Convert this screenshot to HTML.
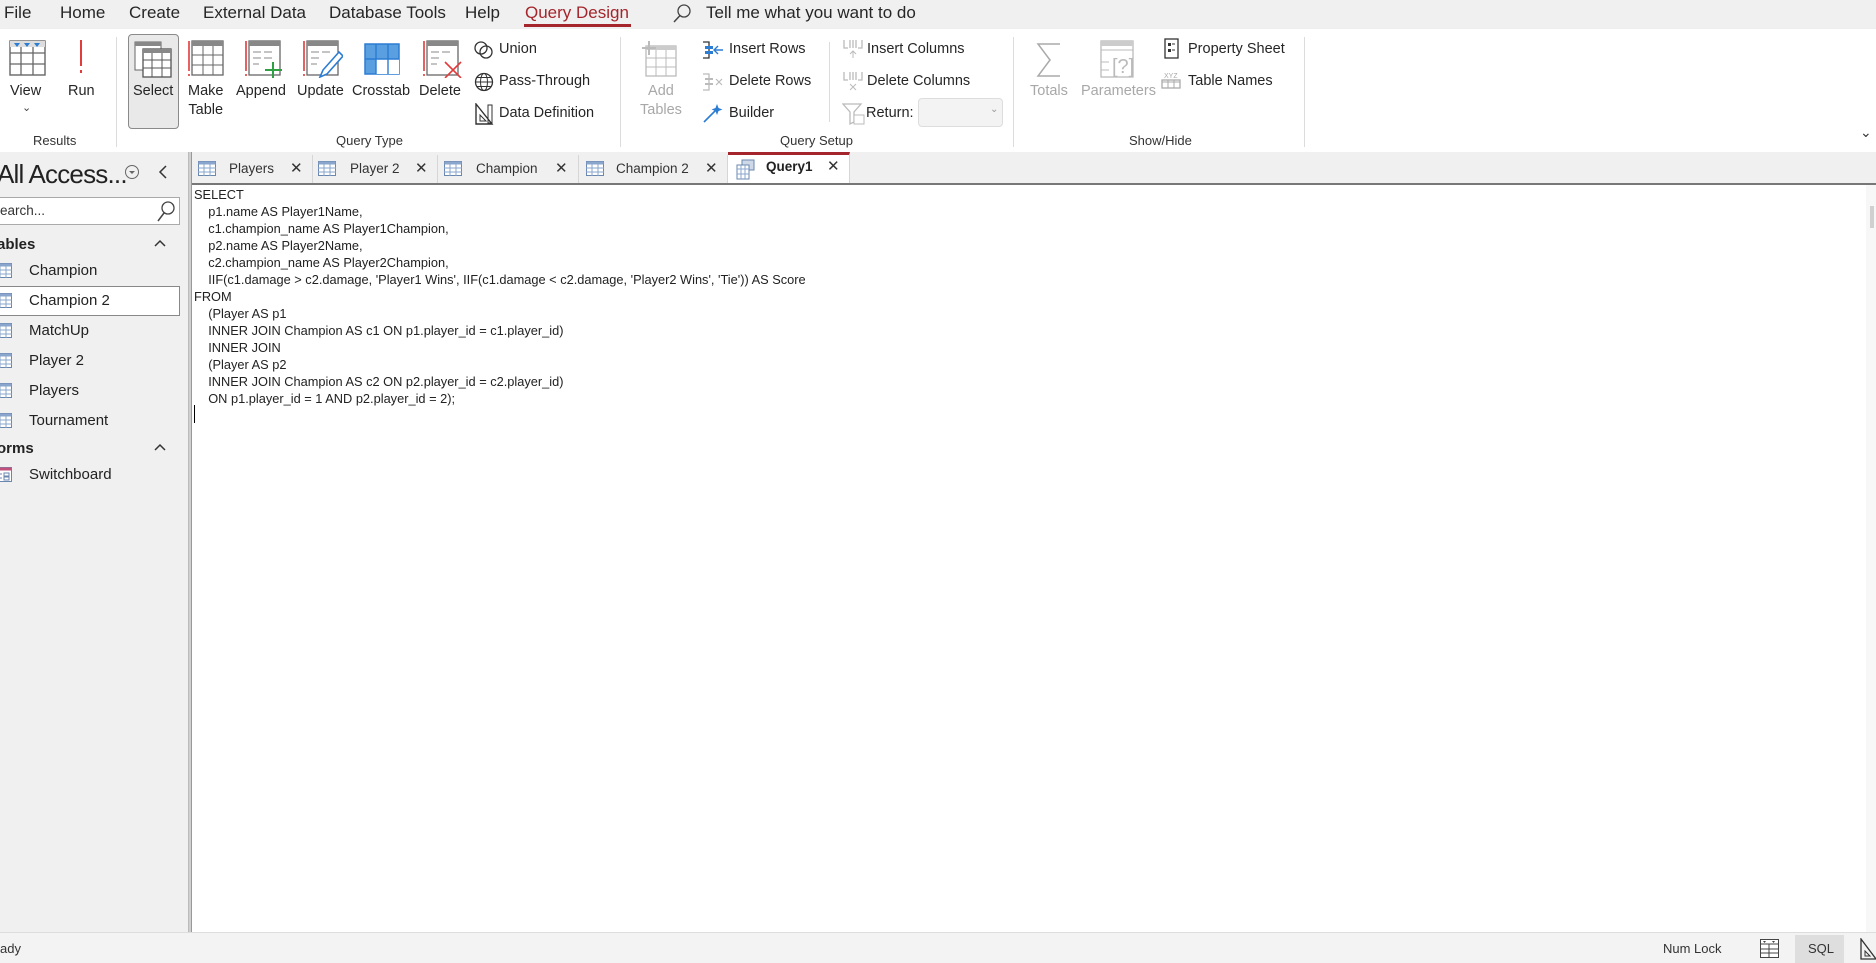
<!DOCTYPE html>
<html><head><meta charset="utf-8"><style>
*{margin:0;padding:0;box-sizing:border-box}
body{width:1876px;height:963px;overflow:hidden;background:#fff;font-family:"Liberation Sans",sans-serif;color:#222;position:relative}
.a{position:absolute;white-space:nowrap}
#top{left:0;top:0;width:1876px;height:29px;background:#f0f0f0}
.tt{top:3px;font-size:17px;color:#262626}
#rib{left:0;top:29px;width:1876px;height:123px;background:#fff;box-shadow:0 2px 3px rgba(0,0,0,.15)}
.lb{font-size:14.5px;color:#262626;text-align:center;line-height:19px}
.gl{top:133px;font-size:13px;color:#333}
.sep{top:37px;width:1px;height:110px;background:#dcdcdc}
.dis{color:#a8a8a8}
.sm{font-size:14.5px;color:#262626}
#sub{left:0;top:152px;width:1876px;height:32px;background:#f0f0f0}
#nav{left:0;top:152px;width:188px;height:780px;background:#f0f0f0}
#div{left:188px;top:152px;width:4px;height:780px;background:#cfcfcf;border-left:1px solid #bbb;border-right:1px solid #999}
.dt{top:155px;height:29px;font-size:13.5px;color:#333;border-right:1px solid #d6d6d6}
.dt span{position:absolute;top:6px}
.dt .x{font-size:15px;top:4px}
#ed{left:192px;top:183px;width:1684px;height:749px;background:#fff;border-top:2px solid #777}
#sql{left:194px;top:186px;font-size:12.8px;line-height:17px;color:#222;white-space:pre;font-family:"Liberation Sans",sans-serif}
.ni{font-size:15px;color:#222;left:29px}
.nh{font-size:15px;font-weight:bold;left:0}
#st{left:0;top:932px;width:1876px;height:31px;background:#f3f3f3;border-top:1px solid #ddd}
</style></head><body>
<div class="a" id="top"></div>
<div class="a tt" style="left:4px">File</div>
<div class="a tt" style="left:60px">Home</div>
<div class="a tt" style="left:129px">Create</div>
<div class="a tt" style="left:203px">External Data</div>
<div class="a tt" style="left:329px">Database Tools</div>
<div class="a tt" style="left:465px">Help</div>
<div class="a tt" style="left:525px;color:#a4262c">Query Design</div>
<div class="a" style="left:524px;top:24px;width:107px;height:3px;background:#a4262c"></div>
<svg class="a" style="left:672px;top:3px" width="20" height="22"><circle cx="12" cy="8" r="6" fill="none" stroke="#444" stroke-width="1.3"/><line x1="8" y1="12.5" x2="2" y2="19" stroke="#444" stroke-width="1.5"/></svg>
<div class="a tt" style="left:706px">Tell me what you want to do</div>

<div class="a" id="rib"></div>
<!-- Results -->
<svg class="a" style="left:9px;top:40px" width="38" height="38"><rect x="1" y="1" width="35" height="34" fill="#fff" stroke="#666" stroke-width="1.4"/><rect x="1" y="1" width="35" height="6" fill="#ddd"/><path d="M5 3h6l-3 4zM15 3h6l-3 4zM25 3h6l-3 4z" fill="#2b7cd3"/><path d="M1 13h35M1 24h35M12 7v28M24 7v28" stroke="#666" stroke-width="1.3"/></svg>
<div class="a lb" style="left:10px;top:82px">View</div>
<div class="a" style="left:22px;top:101px;font-size:11px;color:#444">⌄</div>
<div class="a" style="left:80px;top:40px;width:2px;height:26px;background:#e03c3c"></div>
<div class="a" style="left:80px;top:70px;width:2px;height:3px;background:#e03c3c"></div>
<div class="a lb" style="left:68px;top:82px">Run</div>
<div class="a gl" style="left:33px">Results</div>
<div class="a sep" style="left:116px"></div>
<!-- Query type -->
<div class="a" style="left:128px;top:34px;width:51px;height:95px;background:#e9e9e9;border:1px solid #8a8a8a;border-radius:4px"></div>
<svg class="a" style="left:134px;top:40px" width="40" height="38"><rect x="1" y="2" width="26" height="28" fill="#fff" stroke="#666"/><rect x="1" y="2" width="26" height="4" fill="#888"/><rect x="9" y="9" width="28" height="28" fill="#fff" stroke="#555" stroke-width="1.3"/><rect x="9" y="9" width="28" height="4" fill="#888"/><path d="M9 20h28M9 28h28M18 13v24M28 13v24" stroke="#555"/></svg>
<div class="a lb" style="left:133px;top:82px">Select</div>
<svg class="a" style="left:188px;top:40px" width="38" height="38"><path d="M1 1v30M1 34v2" stroke="#e03c3c" stroke-width="1.6"/><rect x="4" y="1" width="31" height="34" fill="#fff" stroke="#666" stroke-width="1.3"/><rect x="4" y="1" width="31" height="5" fill="#888"/><path d="M4 15h31M4 25h31M15 6v29M25 6v29" stroke="#666"/></svg>
<div class="a lb" style="left:188px;top:82px">Make<br>Table</div>
<svg class="a" style="left:245px;top:40px" width="40" height="38"><path d="M1 1v30M1 34v2" stroke="#e03c3c" stroke-width="1.6"/><rect x="4" y="1" width="31" height="34" fill="#fff" stroke="#666" stroke-width="1.3"/><rect x="4" y="1" width="31" height="5" fill="#888"/><path d="M8 12h8M19 12h8M8 18h8M19 18h8M8 24h6" stroke="#888"/><path d="M28 22v16M20 30h17" stroke="#2ea043" stroke-width="2"/></svg>
<div class="a lb" style="left:236px;top:82px">Append</div>
<svg class="a" style="left:303px;top:40px" width="40" height="38"><path d="M1 1v30M1 34v2" stroke="#e03c3c" stroke-width="1.6"/><rect x="4" y="1" width="31" height="34" fill="#fff" stroke="#666" stroke-width="1.3"/><rect x="4" y="1" width="31" height="5" fill="#888"/><path d="M8 12h8M19 12h8M8 18h8M8 24h6" stroke="#888"/><path d="M36 12l-16 18-3 7 7-3 16-18z" fill="#fff" stroke="#2b7cd3" stroke-width="1.6"/></svg>
<div class="a lb" style="left:297px;top:82px">Update</div>
<svg class="a" style="left:364px;top:43px" width="36" height="32"><rect x="1" y="1" width="34" height="30" fill="#5aa0e0" stroke="#2b7cd3" stroke-width="1.5"/><rect x="12" y="16" width="23" height="15" fill="#fff"/><path d="M1 16h34M12 1v30M24 1v30" stroke="#2b7cd3" stroke-width="1.4"/></svg>
<div class="a lb" style="left:352px;top:82px">Crosstab</div>
<svg class="a" style="left:423px;top:40px" width="40" height="38"><path d="M1 1v30M1 34v2" stroke="#e03c3c" stroke-width="1.6"/><rect x="4" y="1" width="31" height="34" fill="#fff" stroke="#666" stroke-width="1.3"/><rect x="4" y="1" width="31" height="5" fill="#888"/><path d="M8 12h8M19 12h8M8 18h8M8 24h6" stroke="#888"/><path d="M22 22l16 16M38 22l-16 16" stroke="#e03c3c" stroke-width="1.6"/></svg>
<div class="a lb" style="left:419px;top:82px">Delete</div>
<svg class="a" style="left:474px;top:40px" width="20" height="20"><circle cx="7" cy="8" r="6" fill="none" stroke="#333" stroke-width="1.3"/><circle cx="12" cy="12" r="6" fill="none" stroke="#333" stroke-width="1.3"/></svg>
<div class="a sm" style="left:499px;top:41px">Union</div>
<svg class="a" style="left:474px;top:72px" width="20" height="20"><circle cx="10" cy="10" r="8.5" fill="none" stroke="#333" stroke-width="1.3"/><ellipse cx="10" cy="10" rx="3.5" ry="8.5" fill="none" stroke="#333"/><path d="M1.5 10h17M3 5.5h14M3 14.5h14" stroke="#333"/></svg>
<div class="a sm" style="left:499px;top:73px">Pass-Through</div>
<svg class="a" style="left:474px;top:103px" width="20" height="22"><path d="M2 1v20h16z" fill="none" stroke="#333" stroke-width="1.4"/><path d="M6 12v6h6z" fill="none" stroke="#333"/><rect x="14" y="2" width="4" height="18" fill="none" stroke="#333"/></svg>
<div class="a sm" style="left:499px;top:105px">Data Definition</div>
<div class="a gl" style="left:336px">Query Type</div>
<div class="a sep" style="left:620px"></div>
<!-- Query setup -->
<svg class="a" style="left:638px;top:40px" width="40" height="38"><rect x="8" y="6" width="30" height="30" fill="#fff" stroke="#bbb" stroke-width="1.3"/><rect x="8" y="6" width="30" height="4" fill="#ccc"/><path d="M8 18h30M8 27h30M18 10v26M28 10v26" stroke="#bbb"/><path d="M11 1v14M4 8h14" stroke="#bbb" stroke-width="2"/></svg>
<div class="a lb dis" style="left:640px;top:82px">Add<br>Tables</div>
<svg class="a" style="left:702px;top:40px" width="22" height="20"><path d="M1 2h6v16H1" fill="none" stroke="#333" stroke-width="1.3"/><rect x="3" y="6" width="8" height="3" fill="#2b7cd3"/><rect x="3" y="11" width="8" height="3" fill="#2b7cd3"/><path d="M21 10h-8M16 6l-4 4 4 4" fill="none" stroke="#2b7cd3" stroke-width="1.4"/></svg>
<div class="a sm" style="left:729px;top:41px">Insert Rows</div>
<svg class="a" style="left:702px;top:72px" width="22" height="20"><path d="M1 2h6v16H1" fill="none" stroke="#bbb" stroke-width="1.3"/><path d="M3 7h8M3 12h8" stroke="#bbb" stroke-width="2"/><path d="M14 7l6 6M20 7l-6 6" stroke="#bbb" stroke-width="1.2"/></svg>
<div class="a sm dis" style="left:729px;top:73px">Delete Rows</div>
<svg class="a" style="left:702px;top:102px" width="22" height="22"><path d="M2 20L14 8" stroke="#2b7cd3" stroke-width="1.6"/><path d="M15 2l1.5 4 4 1.5-4 1.5-1.5 4-1.5-4-4-1.5 4-1.5z" fill="#2b7cd3"/></svg>
<div class="a sm" style="left:729px;top:105px">Builder</div>
<div class="a" style="left:829px;top:42px;width:1px;height:80px;background:#dcdcdc"></div>
<svg class="a" style="left:842px;top:38px" width="22" height="22"><path d="M2 2v8h4M20 2v8h-4M8 2v8M11 2v8M14 2v8" stroke="#bbb" stroke-width="1.3" fill="none"/><path d="M11 20v-7M8 16l3-3 3 3" stroke="#bbb" fill="none"/></svg>
<div class="a sm dis" style="left:867px;top:41px">Insert Columns</div>
<svg class="a" style="left:842px;top:70px" width="22" height="22"><path d="M2 2v8h4M20 2v8h-4M8 2v8M11 2v8M14 2v8" stroke="#bbb" stroke-width="1.3" fill="none"/><path d="M8 14l6 6M14 14l-6 6" stroke="#bbb"/></svg>
<div class="a sm dis" style="left:867px;top:73px">Delete Columns</div>
<svg class="a" style="left:842px;top:102px" width="24" height="24"><path d="M1 2h18l-7 8v10l-4 2V10z" fill="none" stroke="#bbb" stroke-width="1.3"/><rect x="12" y="13" width="10" height="9" fill="#fff" stroke="#bbb"/></svg>
<div class="a sm dis" style="left:866px;top:105px">Return:</div>
<div class="a" style="left:918px;top:98px;width:85px;height:29px;background:#f3f3f3;border:1px solid #ddd;border-radius:4px"></div>
<div class="a" style="left:990px;top:104px;font-size:10px;color:#999">⌄</div>
<div class="a gl" style="left:780px">Query Setup</div>
<div class="a sep" style="left:1013px"></div>
<!-- Show/Hide -->
<svg class="a" style="left:1036px;top:42px" width="26" height="36"><path d="M24 2H2l12 16L2 34h22" fill="none" stroke="#aaa" stroke-width="1.5"/></svg>
<div class="a lb dis" style="left:1030px;top:82px">Totals</div>
<svg class="a" style="left:1098px;top:40px" width="38" height="38"><rect x="3" y="1" width="32" height="36" fill="#fff" stroke="#bbb" stroke-width="1.3"/><rect x="3" y="1" width="32" height="5" fill="#ccc"/><path d="M3 10h32M3 22h8M3 30h8" stroke="#bbb"/><text x="14" y="33" font-size="20" fill="#bbb" font-family="Liberation Sans">[?]</text></svg>
<div class="a lb dis" style="left:1081px;top:82px">Parameters</div>
<svg class="a" style="left:1164px;top:38px" width="16" height="22"><rect x="1" y="1" width="13" height="19" fill="#fff" stroke="#333" stroke-width="1.3"/><rect x="4" y="5" width="3" height="3" fill="#333"/><rect x="4" y="11" width="3" height="3" fill="#333"/><path d="M8 6h3M8 12h3" stroke="#333"/></svg>
<div class="a sm" style="left:1188px;top:41px">Property Sheet</div>
<svg class="a" style="left:1161px;top:70px" width="20" height="20"><text x="3" y="8" font-size="7" fill="#aaa" font-family="Liberation Sans">XYZ</text><rect x="1" y="10" width="18" height="8" fill="none" stroke="#aaa" stroke-width="1.3"/><path d="M1 12h18M7 10v8M13 10v8" stroke="#aaa"/></svg>
<div class="a sm dis" style="left:1188px;top:73px">Table Names</div>
<div class="a gl" style="left:1129px">Show/Hide</div>
<div class="a sep" style="left:1304px"></div>
<div class="a" style="left:1860px;top:124px;font-size:14px;color:#333">⌄</div>

<!-- below ribbon -->
<div class="a" id="sub"></div>
<div class="a" id="nav"></div>
<div class="a" style="left:-3px;top:159px;font-size:26px;color:#222;letter-spacing:-0.8px">All Access...</div>
<svg class="a" style="left:124px;top:164px" width="16" height="16"><circle cx="8" cy="8" r="6.5" fill="none" stroke="#666"/><path d="M5 7l3 3 3-3z" fill="#666"/></svg>
<svg class="a" style="left:157px;top:164px" width="12" height="16"><path d="M9 2L3 8l6 6" fill="none" stroke="#333" stroke-width="1.5"/></svg>
<div class="a" style="left:-2px;top:197px;width:182px;height:28px;background:#fff;border:1px solid #aaa"></div>
<div class="a" style="left:0;top:203px;font-size:13.5px;color:#333">earch...</div>
<svg class="a" style="left:155px;top:200px" width="22" height="24"><circle cx="13" cy="8" r="6" fill="none" stroke="#444" stroke-width="1.3"/><line x1="9" y1="13" x2="3" y2="21" stroke="#444" stroke-width="1.5"/></svg>
<div class="a nh" style="left:-3px;top:236px">ables</div>
<svg class="a" style="left:154px;top:238px" width="12" height="10"><path d="M1 8l5-5 5 5" fill="none" stroke="#333" stroke-width="1.5"/></svg>
<div class="a" style="left:-2px;top:286px;width:182px;height:30px;background:#fff;border:1px solid #888"></div>
<svg width="0" height="0" style="position:absolute"><defs><g id="ti"><rect x="0.5" y="0.5" width="17" height="14" fill="#fff" stroke="#6a87b0"/><rect x="0.5" y="0.5" width="17" height="3" fill="#8aa6cc"/><path d="M0 7h18M0 11h18M6 3v12M12 3v12" stroke="#8aa6cc"/></g></defs></svg>
<svg class="a" style="left:-6px;top:263px" width="20" height="16"><use href="#ti"/></svg><div class="a ni" style="top:262px">Champion</div>
<svg class="a" style="left:-6px;top:293px" width="20" height="16"><use href="#ti"/></svg><div class="a ni" style="top:292px">Champion 2</div>
<svg class="a" style="left:-6px;top:323px" width="20" height="16"><use href="#ti"/></svg><div class="a ni" style="top:322px">MatchUp</div>
<svg class="a" style="left:-6px;top:353px" width="20" height="16"><use href="#ti"/></svg><div class="a ni" style="top:352px">Player 2</div>
<svg class="a" style="left:-6px;top:383px" width="20" height="16"><use href="#ti"/></svg><div class="a ni" style="top:382px">Players</div>
<svg class="a" style="left:-6px;top:413px" width="20" height="16"><use href="#ti"/></svg><div class="a ni" style="top:412px">Tournament</div>
<div class="a nh" style="left:-3px;top:440px">orms</div>
<svg class="a" style="left:154px;top:442px" width="12" height="10"><path d="M1 8l5-5 5 5" fill="none" stroke="#333" stroke-width="1.5"/></svg>
<svg class="a" style="left:-6px;top:467px" width="20" height="16"><rect x="0.5" y="0.5" width="17" height="14" fill="#fff" stroke="#6a87b0"/><rect x="0.5" y="0.5" width="17" height="3" fill="#c0507a"/><path d="M3 7h5M3 11h5M10 6h5v3h-5zM10 10h5v3h-5z" stroke="#6a87b0" fill="none"/></svg>
<div class="a ni" style="top:466px">Switchboard</div>
<div class="a" id="div"></div>

<!-- doc tabs -->
<div class="a dt" style="left:193px;width:120px"><svg style="position:absolute;left:5px;top:6px" width="20" height="16"><use href="#ti"/></svg><span style="left:36px">Players</span><span class="x" style="left:97px">✕</span></div>
<div class="a dt" style="left:313px;width:125px"><svg style="position:absolute;left:5px;top:6px" width="20" height="16"><use href="#ti"/></svg><span style="left:37px">Player 2</span><span class="x" style="left:102px">✕</span></div>
<div class="a dt" style="left:438px;width:141px"><svg style="position:absolute;left:6px;top:6px" width="20" height="16"><use href="#ti"/></svg><span style="left:38px">Champion</span><span class="x" style="left:117px">✕</span></div>
<div class="a dt" style="left:579px;width:149px"><svg style="position:absolute;left:7px;top:6px" width="20" height="16"><use href="#ti"/></svg><span style="left:37px">Champion 2</span><span class="x" style="left:126px">✕</span></div>
<div class="a dt" style="left:728px;top:152px;height:32px;width:122px;background:#fff;border-top:3px solid #a4262c"><svg style="position:absolute;left:8px;top:4px" width="20" height="22"><rect x="6" y="1" width="12" height="10" fill="#cfd8e6" stroke="#6a87b0"/><rect x="1" y="6" width="12" height="14" fill="#fff" stroke="#6a87b0"/><path d="M1 10h12M1 15h12M5 6v14M9 6v14" stroke="#8aa6cc"/></svg><span style="left:38px;top:4px;font-weight:bold;color:#222">Query1</span><span class="x" style="left:99px;top:2px">✕</span></div>

<div class="a" id="ed"></div>
<div class="a" style="left:1866px;top:185px;width:10px;height:747px;background:#f7f7f7"></div>
<div class="a" style="left:1870px;top:206px;width:4px;height:22px;background:#d0d0d0"></div>
<div class="a" id="sql">SELECT
    p1.name AS Player1Name,
    c1.champion_name AS Player1Champion,
    p2.name AS Player2Name,
    c2.champion_name AS Player2Champion,
    IIF(c1.damage &gt; c2.damage, 'Player1 Wins', IIF(c1.damage &lt; c2.damage, 'Player2 Wins', 'Tie')) AS Score
FROM
    (Player AS p1
    INNER JOIN Champion AS c1 ON p1.player_id = c1.player_id)
    INNER JOIN
    (Player AS p2
    INNER JOIN Champion AS c2 ON p2.player_id = c2.player_id)
    ON p1.player_id = 1 AND p2.player_id = 2);</div>
<div class="a" style="left:194px;top:405px;width:1px;height:18px;background:#000"></div>

<div class="a" id="st"></div>
<div class="a" style="left:0;top:941px;font-size:13px;color:#333">ady</div>
<div class="a" style="left:1663px;top:941px;font-size:13px;color:#333">Num Lock</div>
<svg class="a" style="left:1760px;top:939px" width="20" height="20"><rect x="0.5" y="0.5" width="18" height="18" fill="#fff" stroke="#444"/><path d="M0 5h19M0 10h19M0 14h19M9 5v14" stroke="#444"/><path d="M3 2h3l-1.5 2zM12 2h3l-1.5 2z" fill="#444"/></svg>
<div class="a" style="left:1795px;top:935px;width:49px;height:28px;background:#dedede"></div>
<div class="a" style="left:1808px;top:941px;font-size:13px;color:#333">SQL</div>
<svg class="a" style="left:1860px;top:938px" width="16" height="22"><path d="M1 1v20h15z" fill="none" stroke="#333" stroke-width="1.3"/><path d="M5 13v5h5z" fill="none" stroke="#333"/></svg>
</body></html>
